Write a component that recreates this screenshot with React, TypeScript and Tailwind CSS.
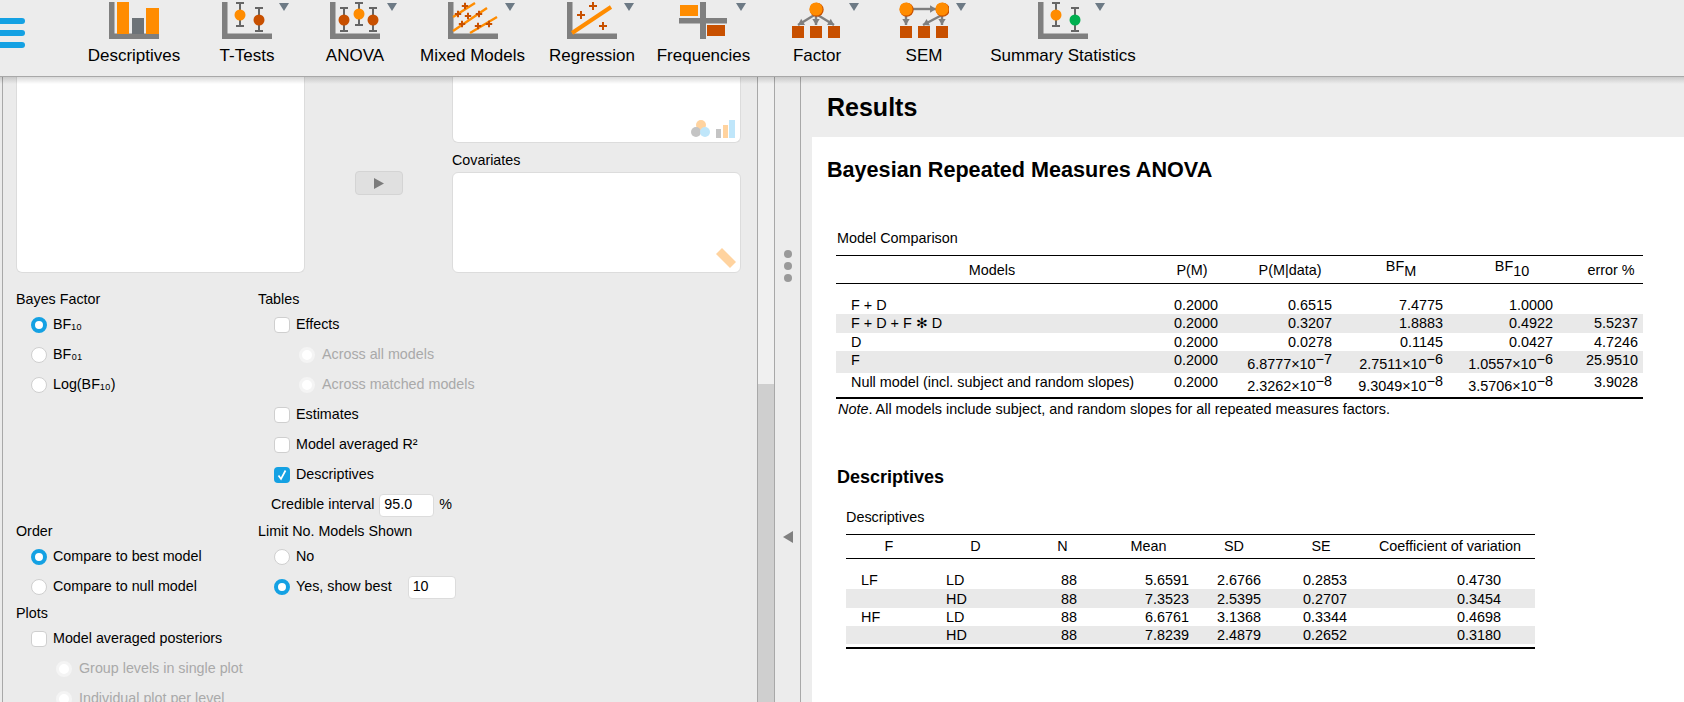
import React from "react";

const O = "#ff8c00";
const R = "#c85000";
const G = "#7f7f7f";

function Axis() {
  return <path d="M0 2h5.5v31.5H50V39H0z" fill={G} />;
}
function Marker({ x, y, t, b, c }: { x: number; y: number; t: number; b: number; c: string }) {
  return (
    <g>
      <path d={`M${x} ${t}V${b}M${x - 4} ${t}h8M${x - 4} ${b}h8`} stroke="#666" strokeWidth="2" fill="none" />
      <circle cx={x} cy={y} r="5.5" fill={c} />
    </g>
  );
}
function Plus({ x, y, s = 3.2 }: { x: number; y: number; s?: number }) {
  return <path d={`M${x - s} ${y}h${2 * s}M${x} ${y - s}v${2 * s}`} stroke={R} strokeWidth="2" fill="none" />;
}
function Boxes({ xs }: { xs: number[] }) {
  return (
    <g>
      {xs.map((x) => (
        <rect key={x} x={x} y="26" width="12" height="12" fill={R} />
      ))}
    </g>
  );
}
function Arrow({ x1, y1, x2, y2 }: { x1: number; y1: number; x2: number; y2: number }) {
  const a = Math.atan2(y2 - y1, x2 - x1);
  const l = 7;
  const p = (d: number) => `${x2 - l * Math.cos(a + d)} ${y2 - l * Math.sin(a + d)}`;
  return (
    <g>
      <line x1={x1} y1={y1} x2={x2} y2={y2} stroke={G} strokeWidth="2.4" />
      <polygon points={`${x2} ${y2} ${p(0.55)} ${p(-0.55)}`} fill={G} />
    </g>
  );
}
function Ball({ x }: { x: number }) {
  return (
    <g>
      <circle cx={x + 0.7} cy="9.7" r="7" fill={R} />
      <circle cx={x} cy="9" r="6.6" fill={O} />
    </g>
  );
}

function Icon({ name }: { name: string }) {
  let body: React.ReactNode = null;
  if (name === "Descriptives")
    body = (
      <>
        <Axis />
        <rect x="8" y="2" width="12" height="32" fill={O} />
        <rect x="23" y="18" width="12" height="16" fill="#6d7378" />
        <rect x="37" y="8" width="13" height="26" fill={O} />
      </>
    );
  if (name === "T-Tests")
    body = (
      <>
        <Axis />
        <Marker x={18} y={15} t={3} b={26} c={O} />
        <Marker x={37} y={20} t={8} b={31} c={R} />
      </>
    );
  if (name === "ANOVA")
    body = (
      <>
        <Axis />
        <Marker x={14} y={20} t={8} b={31} c={R} />
        <Marker x={29} y={14} t={3} b={25} c={O} />
        <Marker x={43} y={20} t={8} b={31} c={R} />
      </>
    );
  if (name === "Mixed Models")
    body = (
      <>
        <Axis />
        <path d="M5 17L27 3M5 31L39 8M22 33L49 17" stroke={O} strokeWidth="2.4" fill="none" />
        <Plus x={10} y={14} />
        <Plus x={17} y={6} />
        <Plus x={14} y={24} />
        <Plus x={20} y={16} />
        <Plus x={31} y={14} />
        <Plus x={30} y={26} />
        <Plus x={41} y={24} />
      </>
    );
  if (name === "Regression")
    body = (
      <>
        <Axis />
        <path d="M5 33L44 7" stroke={O} strokeWidth="4" fill="none" />
        <Plus x={14} y={15} s={4} />
        <Plus x={26} y={6} s={4} />
        <Plus x={36} y={26} s={4} />
      </>
    );
  if (name === "Frequencies")
    body = (
      <>
        <rect x="0" y="18" width="48" height="5.5" fill={G} />
        <rect x="21" y="2" width="6" height="37" fill={G} />
        <rect x="1" y="5" width="18" height="11" fill={O} />
        <rect x="28" y="25" width="18" height="11" fill={R} />
      </>
    );
  if (name === "Factor")
    body = (
      <>
        <Arrow x1={24} y1={14} x2={6} y2={25} />
        <Arrow x1={24} y1={14} x2={24} y2={25} />
        <Arrow x1={24} y1={14} x2={42} y2={25} />
        <Ball x={24} />
        <Boxes xs={[0, 18, 36]} />
      </>
    );
  if (name === "SEM")
    body = (
      <>
        <Arrow x1={12} y1={9} x2={37} y2={9} />
        <Arrow x1={7} y1={15} x2={7} y2={25} />
        <Arrow x1={43} y1={15} x2={24} y2={25} />
        <Arrow x1={43} y1={15} x2={43} y2={25} />
        <Ball x={7} />
        <Ball x={43} />
        <Boxes xs={[1, 19, 37]} />
      </>
    );
  if (name === "Summary Statistics")
    body = (
      <>
        <Axis />
        <Marker x={18} y={15} t={3} b={26} c={O} />
        <Marker x={37} y={20} t={8} b={31} c="#00b050" />
      </>
    );
  return (
    <svg width="50" height="39" viewBox="0 0 50 39" className="block">
      {body}
    </svg>
  );
}

const tools: { name: string; w: string; menu: boolean }[] = [
  { name: "Descriptives", w: "w-[112px]", menu: false },
  { name: "T-Tests", w: "w-[114px]", menu: true },
  { name: "ANOVA", w: "w-[102px]", menu: true },
  { name: "Mixed Models", w: "w-[133px]", menu: true },
  { name: "Regression", w: "w-[106px]", menu: true },
  { name: "Frequencies", w: "w-[117px]", menu: true },
  { name: "Factor", w: "w-[110px]", menu: true },
  { name: "SEM", w: "w-[104px]", menu: true },
  { name: "Summary Statistics", w: "w-[174px]", menu: true },
];

function Toolbar() {
  return (
    <div className="flex h-[77px] shrink-0 border-b border-[#a8a8a8] bg-[#ececec]">
      <div className="flex w-[78px] flex-col gap-[6px] pt-[18px]">
        <div className="h-[6px] w-[25px] rounded-r-full bg-[#14a1e3]" />
        <div className="h-[6px] w-[25px] rounded-r-full bg-[#14a1e3]" />
        <div className="h-[6px] w-[25px] rounded-r-full bg-[#14a1e3]" />
      </div>
      {tools.map((t) => (
        <div key={t.name} className={`${t.w} flex flex-col items-center`}>
          <div className="relative h-[39px] w-[50px]">
            <Icon name={t.name} />
            {t.menu && (
              <svg width="10" height="8" viewBox="0 0 10 8" className="absolute left-[57px] top-[3px]">
                <path d="M0 0h10L5 8z" fill="#6d7a85" />
              </svg>
            )}
          </div>
          <div className="mt-[7px] whitespace-nowrap text-[17px] leading-[20px] text-black">{t.name}</div>
        </div>
      ))}
    </div>
  );
}

function Radio({ on, off }: { on?: boolean; off?: boolean }) {
  if (on) return <span className="block h-4 w-4 shrink-0 rounded-full border-[4px] border-[#14a1e3] bg-white" />;
  if (off) return <span className="block h-4 w-4 shrink-0 rounded-full border-[3px] border-[#f4f4f4] bg-white" />;
  return <span className="block h-4 w-4 shrink-0 rounded-full border border-[#cfcfcf] bg-white" />;
}

function Check({ on }: { on?: boolean }) {
  if (on)
    return (
      <span className="flex h-4 w-4 shrink-0 items-center justify-center rounded-[4px] bg-[#14a1e3]">
        <svg width="12" height="12" viewBox="0 0 12 12">
          <path d="M2.5 6.5L5 10L9.5 1.5" stroke="#fff" strokeWidth="1.7" fill="none" />
        </svg>
      </span>
    );
  return <span className="block h-4 w-4 shrink-0 rounded-[4px] border border-[#cfcfcf] bg-white" />;
}

function Row({ className, children }: { className: string; children: React.ReactNode }) {
  return <div className={`flex h-[30px] items-center whitespace-nowrap ${className}`}>{children}</div>;
}

function Label({ children }: { children: React.ReactNode }) {
  return <div className="mb-[2px] h-[18px] pl-0 leading-[18px]">{children}</div>;
}

function LeftPanel() {
  return (
    <div className="relative h-full w-[758px] shrink-0 overflow-hidden border-r border-[#a8a8a8] bg-[#ebebeb] pl-[2px] text-[14.3px] text-black">
      <div className="h-full border-l border-[#a8a8a8] pl-[13px]">
        <div className="flex h-[196px] items-stretch">
          <div className="h-full w-[289px] rounded-b-[6px] border-x border-b border-[#dcdcdc] bg-white" />
          <div className="flex w-[147px] items-start justify-center pt-[94px]">
            <div className="flex h-6 w-12 items-center justify-center rounded-[4px] border border-[#d4d4d4] bg-[#e0e0e0]">
              <svg width="10" height="11" viewBox="0 0 10 11">
                <path d="M0 0l10 5.5L0 11z" fill="#7c7c7c" />
              </svg>
            </div>
          </div>
          <div className="w-[289px]">
            <div className="relative h-[66px] rounded-b-[6px] border-x border-b border-[#dcdcdc] bg-white">
              <svg width="46" height="20" viewBox="0 0 46 20" className="absolute bottom-[3px] right-[4px]">
                <circle cx="11" cy="6" r="5" fill="#ffd39f" />
                <circle cx="6" cy="13" r="5" fill="#c4c4c4" />
                <circle cx="15" cy="13" r="5" fill="#bfe6fa" />
                <rect x="26" y="10" width="5" height="9" fill="#c4c4c4" />
                <rect x="33" y="6" width="5" height="13" fill="#ffd39f" />
                <rect x="39" y="1" width="6" height="18" fill="#bfe6fa" />
              </svg>
            </div>
            <div className="mt-2 h-[18px] leading-[18px]">Covariates</div>
            <div className="relative mt-[3px] h-[101px] rounded-[6px] border border-[#dcdcdc] bg-white">
              <svg width="22" height="22" viewBox="0 0 22 22" className="absolute bottom-[3px] right-[3px]">
                <path d="M1 7L7 1L21 15L15 21z" fill="#ffd39f" />
              </svg>
            </div>
          </div>
        </div>
        <div className="mt-[17px] grid h-[232px] grid-cols-[242px_1fr]">
          <div>
            <Label>Bayes Factor</Label>
            <Row className="gap-[6px] pl-[15px]"><Radio on /><span>BF₁₀</span></Row>
            <Row className="gap-[6px] pl-[15px]"><Radio /><span>BF₀₁</span></Row>
            <Row className="gap-[6px] pl-[15px]"><Radio /><span>Log(BF₁₀)</span></Row>
          </div>
          <div>
            <Label>Tables</Label>
            <Row className="gap-[6px] pl-[16px]"><Check /><span>Effects</span></Row>
            <Row className="gap-[7px] pl-[41px] text-[#a9a9a9]"><Radio off /><span>Across all models</span></Row>
            <Row className="gap-[7px] pl-[41px] text-[#a9a9a9]"><Radio off /><span>Across matched models</span></Row>
            <Row className="gap-[6px] pl-[16px]"><Check /><span>Estimates</span></Row>
            <Row className="gap-[6px] pl-[16px]"><Check /><span>Model averaged R²</span></Row>
            <Row className="gap-[6px] pl-[16px]"><Check on /><span>Descriptives</span></Row>
            <Row className="pl-[13px]">
              <span>Credible interval</span>
              <div className="ml-[5px] flex h-[23px] w-[55px] items-center rounded-[4px] border border-[#dcdcdc] bg-white pl-1">95.0</div>
              <span className="ml-[5px]">%</span>
            </Row>
          </div>
        </div>
        <div className="grid h-[82px] grid-cols-[242px_1fr]">
          <div>
            <Label>Order</Label>
            <Row className="gap-[6px] pl-[15px]"><Radio on /><span>Compare to best model</span></Row>
            <Row className="gap-[6px] pl-[15px]"><Radio /><span>Compare to null model</span></Row>
          </div>
          <div>
            <Label>Limit No. Models Shown</Label>
            <Row className="gap-[6px] pl-[16px]"><Radio /><span>No</span></Row>
            <Row className="gap-[6px] pl-[16px]">
              <Radio on />
              <span>Yes, show best</span>
              <div className="ml-[10px] flex h-[23px] w-[48px] items-center rounded-[4px] border border-[#dcdcdc] bg-white pl-1">10</div>
            </Row>
          </div>
        </div>
        <Label>Plots</Label>
        <Row className="gap-[6px] pl-[15px]"><Check /><span>Model averaged posteriors</span></Row>
        <Row className="gap-[7px] pl-[40px] text-[#a9a9a9]"><Radio off /><span>Group levels in single plot</span></Row>
        <Row className="gap-[7px] pl-[40px] text-[#a9a9a9]"><Radio off /><span>Individual plot per level</span></Row>
      </div>
    </div>
  );
}

function Gutter() {
  return (
    <>
      <div className="flex h-full w-[17px] shrink-0 flex-col border-r border-[#a8a8a8]">
        <div className="h-[307px] bg-[#f0f0f0]" />
        <div className="flex-1 bg-[#cfcfcf]" />
      </div>
      <div className="flex h-full w-[26px] shrink-0 flex-col items-center border-r border-[#a8a8a8] bg-[#ececec]">
        <div className="mt-[173px] flex flex-col gap-1">
          <span className="block h-2 w-2 rounded-full bg-[#9a9a9a]" />
          <span className="block h-2 w-2 rounded-full bg-[#9a9a9a]" />
          <span className="block h-2 w-2 rounded-full bg-[#9a9a9a]" />
        </div>
        <svg width="10" height="12" viewBox="0 0 10 12" className="mt-[249px]">
          <path d="M10 0v12L0 6z" fill="#808080" />
        </svg>
      </div>
    </>
  );
}

function Sci({ m, e }: { m: string; e: string }) {
  return (
    <span className="mt-[4px] block leading-[19px]">
      {m}×10<span className="align-[5px] leading-[0]">−{e}</span>
    </span>
  );
}

const mainCols = "grid grid-cols-[312px_88px_108px_114px_108px_77px]";

const mainRows: { bg: string; h: string; cells: React.ReactNode[] }[] = [
  { bg: "", h: "h-[18px]", cells: ["F + D", "0.2000", "0.6515", "7.4775", "1.0000", ""] },
  { bg: "bg-[#e9e9e9]", h: "h-[19px]", cells: ["F + D + F ✻ D", "0.2000", "0.3207", "1.8883", "0.4922", "5.5237"] },
  { bg: "", h: "h-[18px]", cells: ["D", "0.2000", "0.0278", "0.1145", "0.0427", "4.7246"] },
  {
    bg: "bg-[#e9e9e9]",
    h: "h-[22px]",
    cells: ["F", "0.2000", <Sci m="6.8777" e="7" />, <Sci m="2.7511" e="6" />, <Sci m="1.0557" e="6" />, "25.9510"],
  },
  {
    bg: "",
    h: "h-[24px]",
    cells: ["Null model (incl. subject and random slopes)", "0.2000", <Sci m="2.3262" e="8" />, <Sci m="9.3049" e="8" />, <Sci m="3.5706" e="8" />, "3.9028"],
  },
];

const mainPad = ["pl-[15px] text-left", "pr-[18px] text-right", "pr-[12px] text-right", "pr-[15px] text-right", "pr-[13px] text-right", "pr-[5px] text-right"];

function MainTable() {
  return (
    <div className="w-[807px] text-[14.4px] text-black">
      <div className="h-[18px] pl-[1px] leading-[18px]">Model Comparison</div>
      <div className={`${mainCols} mt-2 h-[29px] items-center border-y-[1.5px] border-black text-center`}>
        <div className="pt-[3px]">Models</div>
        <div className="pt-[3px]">P(M)</div>
        <div className="pt-[3px]">P(M|data)</div>
        <div>
          BF<span className="align-[-5px]">M</span>
        </div>
        <div>
          BF<span className="align-[-5px]">10</span>
        </div>
        <div className="pl-[13px] pt-[3px]">error %</div>
      </div>
      <div className="pt-[12px]">
        {mainRows.map((r, i) => (
          <div key={i} className={`${mainCols} ${r.bg} ${r.h} items-start leading-[18px]`}>
            {r.cells.map((c, j) => (
              <div key={j} className={`whitespace-nowrap ${mainPad[j]}`}>
                {c}
              </div>
            ))}
          </div>
        ))}
      </div>
      <div className="h-[2px] bg-black" />
      <div className="mt-[1px] h-[18px] pl-[2px] leading-[18px]">
        <i>Note</i>. All models include subject, and random slopes for all repeated measures factors.
      </div>
    </div>
  );
}

const descCols = "grid grid-cols-[86px_87px_87px_85px_86px_88px_170px]";
const descPad = ["pl-[15px] text-left", "pl-[14px] text-left", "pr-[29px] text-right", "pr-[2px] text-right", "pr-[16px] text-right", "pr-[18px] text-right", "pr-[34px] text-right"];
const descRows = [
  { bg: "", h: "h-[19px]", cells: ["LF", "LD", "88", "5.6591", "2.6766", "0.2853", "0.4730"] },
  { bg: "bg-[#e9e9e9]", h: "h-[19px]", cells: ["", "HD", "88", "7.3523", "2.5395", "0.2707", "0.3454"] },
  { bg: "", h: "h-[18px]", cells: ["HF", "LD", "88", "6.6761", "3.1368", "0.3344", "0.4698"] },
  { bg: "bg-[#e9e9e9]", h: "h-[18px]", cells: ["", "HD", "88", "7.8239", "2.4879", "0.2652", "0.3180"] },
];

function DescTable() {
  return (
    <div className="ml-[19px] w-[689px] text-[14.4px] text-black">
      <div className="h-[18px] leading-[18px]">Descriptives</div>
      <div className={`${descCols} mt-2 h-[25px] items-center border-y-[1.5px] border-black text-center`}>
        {["F", "D", "N", "Mean", "SD", "SE", "Coefficient of variation"].map((h) => (
          <div key={h} className="whitespace-nowrap">{h}</div>
        ))}
      </div>
      <div className="pt-[11px]">
        {descRows.map((r, i) => (
          <div key={i} className={`${descCols} ${r.bg} ${r.h} items-center leading-[18px]`}>
            {r.cells.map((c, j) => (
              <div key={j} className={descPad[j]}>{c}</div>
            ))}
          </div>
        ))}
      </div>
      <div className="mt-[3px] h-[2px] bg-black" />
    </div>
  );
}

function RightPanel() {
  return (
    <div className="flex h-full min-w-0 flex-1 flex-col bg-[#ededed]">
      <div className="flex h-[60px] shrink-0 items-center pl-[26px] pt-[1px] text-[25px] font-bold text-black">Results</div>
      <div className="ml-[11px] flex-1 bg-white pl-[15px] pt-[21px]">
        <div className="h-[24px] text-[21.6px] font-bold leading-[24px] text-black">Bayesian Repeated Measures ANOVA</div>
        <div className="ml-[9px] mt-[47px]">
          <MainTable />
        </div>
        <div className="ml-[10px] mt-[48px] h-[22px] text-[18px] font-bold leading-[22px] text-black">Descriptives</div>
        <div className="mt-[20px]">
          <DescTable />
        </div>
      </div>
    </div>
  );
}

export default function App() {
  return (
    <div className="relative flex h-[702px] w-[1684px] flex-col overflow-hidden bg-[#ececec] font-['Liberation_Sans',Arial,sans-serif]">
      <Toolbar />
      <div className="relative flex min-h-0 flex-1">
        <LeftPanel />
        <Gutter />
        <RightPanel />
        <div className="pointer-events-none absolute left-0 right-0 top-0 h-[7px] bg-gradient-to-b from-[#00000026] to-transparent" />
      </div>
    </div>
  );
}
